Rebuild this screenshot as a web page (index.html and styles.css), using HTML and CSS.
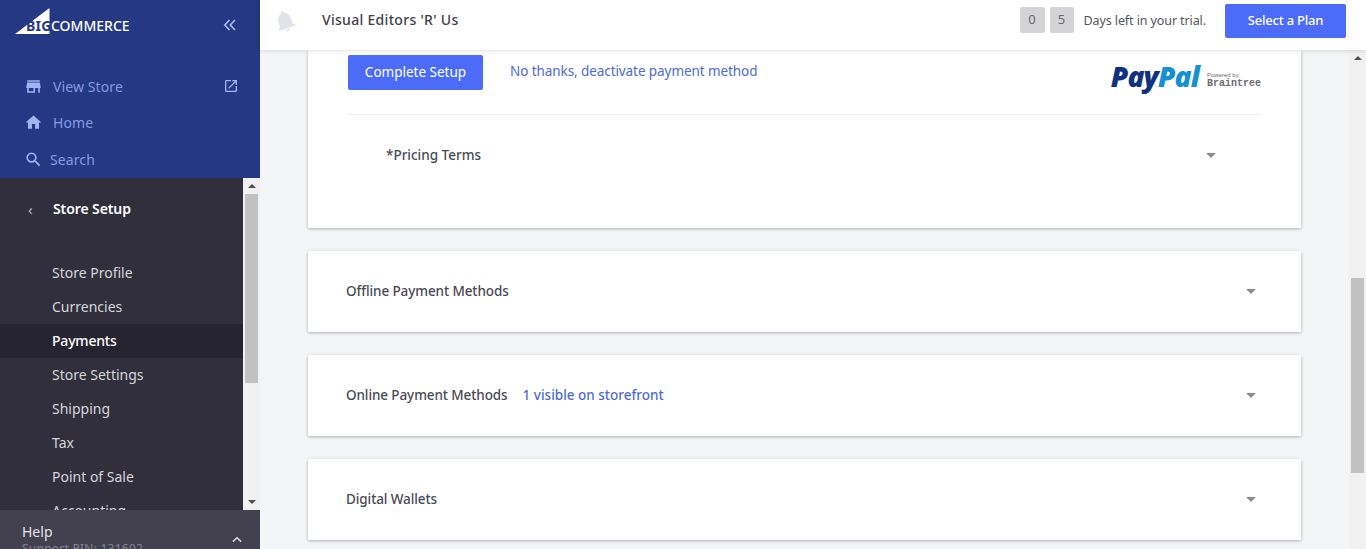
FILE: index.html
```html
<!DOCTYPE html>
<html lang="en">
<head>
<meta charset="utf-8">
<title>Payments</title>
<link rel="stylesheet" href="styles.css">
</head>
<body>
<div class="app">
  <aside class="sidebar">
    <div class="brand">
      <div class="logo">
        <svg class="logo-tri" viewBox="0 0 36 27" width="36" height="27"><path d="M0 26 L34.5 0 V26 Z" fill="#fff"/></svg>
        <span class="logo-big">BIG</span><span class="logo-commerce">COMMERCE</span>
      </div>
      <svg class="collapse" viewBox="0 0 14 14" width="14" height="14"><path d="M6.5 2 L1.8 7 L6.5 12 M12 2 L7.3 7 L12 12" fill="none" stroke="#a9b7f0" stroke-width="1.7"/></svg>
    </div>
    <nav class="top-nav">
      <a class="top-item">
        <svg class="ti" viewBox="0 0 24 24" width="19" height="19"><path d="M20 4H4v2h16V4zm1 10v-2l-1-5H4l-1 5v2h1v6h10v-6h4v6h2v-6h1zm-9 4H6v-4h6v4z"/></svg>
        <span class="ti-label">View Store</span>
        <svg class="ti-ext" viewBox="0 0 24 24" width="16" height="16"><path d="M19 19H5V5h7V3H5a2 2 0 0 0-2 2v14a2 2 0 0 0 2 2h14c1.1 0 2-.9 2-2v-7h-2v7zM14 3v2h3.59l-9.83 9.83 1.41 1.41L19 6.41V10h2V3h-7z"/></svg>
      </a>
      <a class="top-item">
        <svg class="ti" viewBox="0 0 24 24" width="19" height="19"><path d="M10 20v-6h4v6h5v-8h3L12 3 2 12h3v8z"/></svg>
        <span class="ti-label">Home</span>
      </a>
      <a class="top-item search">
        <svg class="ti" viewBox="0 0 24 24" width="19" height="19"><path d="M15.5 14h-.79l-.28-.27A6.471 6.471 0 0 0 16 9.5 6.5 6.5 0 1 0 9.5 16c1.61 0 3.09-.59 4.23-1.57l.27.28v.79l5 4.99L20.49 19l-4.99-5zm-6 0C7.01 14 5 11.99 5 9.5S7.01 5 9.5 5 14 7.01 14 9.5 11.99 14 9.5 14z"/></svg>
        <span class="ti-label">Search</span>
      </a>
    </nav>
    <div class="sub-wrap">
      <div class="sub-nav">
        <div class="sub-head"><span class="back">‹</span><span class="sub-title">Store Setup</span></div>
        <ul class="sub-list">
          <li>Store Profile</li>
          <li>Currencies</li>
          <li class="active">Payments</li>
          <li>Store Settings</li>
          <li>Shipping</li>
          <li>Tax</li>
          <li>Point of Sale</li>
          <li>Accounting</li>
        </ul>
      </div>
      <div class="sbar">
        <div class="sbar-btn"><span class="arrow-up"></span></div>
        <div class="sbar-thumb side-thumb"></div>
        <div class="sbar-fill"></div>
        <div class="sbar-btn"><span class="arrow-down"></span></div>
      </div>
    </div>
    <div class="help">
      <div class="help-text">
        <div class="help-title">Help</div>
        <div class="help-pin">Support PIN: 131692</div>
      </div>
      <svg class="help-chev" viewBox="0 0 12 8" width="10" height="7"><path d="M1 6.5 L6 1.8 L11 6.5" fill="none" stroke="#d8d8de" stroke-width="1.8"/></svg>
    </div>
  </aside>
  <div class="right">
    <header class="topbar">
      <svg class="bell" viewBox="0 0 24 24" width="26" height="26"><path d="M12 22c1.1 0 2-.9 2-2h-4c0 1.1.9 2 2 2zm6-6v-5c0-3.07-1.63-5.64-4.5-6.32V4c0-.83-.67-1.5-1.5-1.5s-1.5.67-1.5 1.5v.68C7.64 5.36 6 7.92 6 11v5l-2 2v1h16v-1l-2-2z"/></svg>
      <div class="store-name">Visual Editors 'R' Us</div>
      <div class="trial">
        <span class="digit">0</span>
        <span class="digit">5</span>
        <span class="trial-text">Days left in your trial.</span>
      </div>
      <button class="btn plan-btn">Select a Plan</button>
    </header>
    <div class="below">
      <main class="content">
        <section class="card first">
          <div class="setup-row">
            <button class="btn setup-btn">Complete Setup</button>
            <a class="link deactivate">No thanks, deactivate payment method</a>
            <div class="paypal">
              <span class="pp-word"><span class="pp-pay">Pay</span><span class="pp-pal">Pal</span></span>
              <span class="pp-by"><span class="pp-powered">Powered by</span><span class="pp-bt">Braintree</span></span>
            </div>
          </div>
          <div class="pricing">
            <span class="pricing-label">*Pricing Terms</span>
            <span class="caret"></span>
          </div>
        </section>
        <section class="card fold">
          <span class="fold-title">Offline Payment Methods</span>
          <span class="caret"></span>
        </section>
        <section class="card fold">
          <span class="fold-title">Online Payment Methods</span>
          <span class="fold-note">1 visible on storefront</span>
          <span class="caret"></span>
        </section>
        <section class="card fold">
          <span class="fold-title">Digital Wallets</span>
          <span class="caret"></span>
        </section>
      </main>
      <div class="sbar page-bar">
        <div class="sbar-btn"><span class="arrow-up"></span></div>
        <div class="sbar-space"></div>
        <div class="sbar-thumb page-thumb"></div>
        <div class="sbar-fill"></div>
      </div>
    </div>
  </div>
</div>
</body>
</html>
```
FILE: styles.css
```css
* { box-sizing: border-box; }
html, body { margin: 0; height: 100%; overflow: hidden; }
body { font-family: "Noto Sans", "Open Sans", sans-serif; font-size: 14px; background: #f4f5f7; color: #3c3c46; }
.app { display: flex; height: 549px; overflow: hidden; }

/* Sidebar */
.sidebar { width: 260px; flex: none; display: flex; flex-direction: column; height: 549px; }
.brand { height: 68px; background: #253883; padding: 8px 23px 0 15px; display: flex; justify-content: space-between; align-items: flex-start; }
.logo { position: relative; width: 116px; height: 27px; display: flex; align-items: center; padding-left: 11px; }
.logo-tri { position: absolute; left: 0; top: 0; }
.logo-big { position: relative; color: #253883; font-weight: 700; font-size: 14px; width: 25px; margin-top: 7px; letter-spacing: .2px; }
.logo-commerce { position: relative; color: #fff; font-weight: 500; font-size: 14px; margin-top: 7px; letter-spacing: 0; }
.collapse { margin-top: 10px; }
.top-nav { height: 110px; background: #253883; display: flex; flex-direction: column; }
.top-item { height: 36.5px; display: flex; align-items: center; padding: 0 21px 0 24px; color: #8798e0; font-size: 14px; letter-spacing: .1px; }
.ti { fill: #a3b3f3; flex: none; }
.ti-label { margin-left: 10px; flex: 1; }
.search .ti-label { margin-left: 7px; }
.ti-ext { fill: #a3b3f3; flex: none; }
.sub-wrap { flex: 1; min-height: 0; display: flex; background: #312f3c; overflow: hidden; }
.sub-nav { flex: 1; min-width: 0; }
.sub-head { height: 61px; display: flex; align-items: center; padding: 0 0 0 28px; color: #fff; }
.back { width: 25px; color: #b5b5bd; font-size: 15px; }
.sub-title { font-weight: 600; font-size: 14px; letter-spacing: -.1px; }
.sub-list { list-style: none; margin: 17px 0 0; padding: 0; }
.sub-list li { height: 34px; line-height: 34px; padding-left: 52px; color: #d5d5da; font-size: 14px; }
.sub-list li.active { background: #262430; color: #fff; font-weight: 500; letter-spacing: -.2px; }
.sbar { width: 17px; flex: none; background: #f1f1f1; display: flex; flex-direction: column; align-items: center; }
.sbar-btn { height: 16px; flex: none; width: 100%; display: flex; align-items: center; justify-content: center; }
.sbar-thumb { width: 13px; background: #c1c1c1; flex: none; }
.side-thumb { height: 189px; }
.sbar-fill { flex: 1; }
.sbar-space { height: 212px; flex: none; }
.page-thumb { height: 195px; }
.arrow-up { border: 4px solid transparent; border-top: 0; border-bottom: 4px solid #505050; }
.arrow-down { border: 4px solid transparent; border-bottom: 0; border-top: 4px solid #505050; }
.help { height: 39px; flex: none; background: #42404e; display: flex; justify-content: space-between; padding: 13px 18px 0 22px; overflow: hidden; }
.help-title { color: #e4e4e8; font-size: 14px; line-height: 17px; }
.help-pin { color: #85838f; font-size: 12px; line-height: 14px; margin-top: 2px; letter-spacing: .25px; }
.help-chev { margin-top: 13px; }

/* Right */
.right { flex: 1; min-width: 0; display: flex; flex-direction: column; height: 549px; }
.topbar { height: 50px; flex: none; background: #fff; box-shadow: 0 1px 4px rgba(40,40,60,.14); position: relative; z-index: 2; display: flex; align-items: flex-start; padding: 0 20px 0 12px; }
.bell { fill: #e0e3ea; transform: rotate(-18deg); margin-top: 8px; }
.store-name { margin-left: 24px; margin-top: 10px; font-size: 14px; line-height: 20px; font-weight: 500; letter-spacing: .3px; color: #3f3f49; }
.trial { margin-left: auto; display: flex; align-items: center; margin-top: 7px; height: 26px; }
.digit { width: 25px; height: 26px; margin-right: 5px; background: #d4d4d6; border-radius: 2px; text-align: center; line-height: 25px; font-size: 13px; color: #696970; }
.digit + .digit { width: 24px; }
.trial-text { margin-left: 5px; font-size: 12.5px; color: #55555e; margin-right: 19px; white-space: nowrap; letter-spacing: -.1px; }
.btn { border: 0; border-radius: 2px; background: #4b6bf8; color: #fff; font-family: inherit; padding: 0 0 2px; }
.plan-btn { width: 121px; height: 34px; margin-top: 4px; font-size: 13px; font-weight: 500; letter-spacing: -.2px; }
.below { flex: 1; min-height: 0; display: flex; overflow: hidden; }
.content { flex: 1; min-width: 0; padding: 0 48px; overflow: hidden; }
.page-bar { height: 100%; }
.card { background: #fff; box-shadow: 0 1px 3px rgba(50,50,60,.35); margin-bottom: 23px; }
.first { height: 178px; padding: 5px 40px 0; }
.setup-row { height: 60px; display: flex; align-items: flex-start; border-bottom: 1px solid #eceef1; }
.setup-btn { width: 135px; height: 35px; flex: none; font-size: 13.5px; font-weight: 400; }
.link { color: #4f6bd0; }
.deactivate { margin-left: 27px; margin-top: 6px; font-size: 13.5px; line-height: 20px; letter-spacing: -.08px; }
.paypal { margin-left: auto; display: flex; align-items: flex-start; margin-top: 6px; }
.pp-word { font-family: "Open Sans", sans-serif; font-weight: 800; font-style: italic; font-size: 28px; line-height: 30px; letter-spacing: -.85px; }
.pp-pay { color: #11327f; }
.pp-pal { color: #1490d3; }
.pp-by { display: flex; flex-direction: column; margin-left: 8px; margin-top: 11px; color: #6b6b70; }
.pp-powered { font-size: 6px; line-height: 7px; font-family: "Liberation Sans", sans-serif; }
.pp-bt { font-family: "Liberation Mono", monospace; font-weight: 700; font-size: 10px; line-height: 10px; }
.pricing { display: flex; align-items: center; justify-content: space-between; padding: 0 45px 0 38px; height: 80px; }
.pricing-label { font-weight: 500; font-size: 13.5px; color: #4a4a54; }
.caret { border: 5px solid transparent; border-bottom: 0; border-top: 5px solid #8a8a92; }
.fold { height: 81px; display: flex; align-items: center; padding: 0 45px 1px 38px; }
.fold-title { font-weight: 500; font-size: 13.5px; letter-spacing: -.1px; color: #4a4a54; }
.fold-note { margin-left: 15px; color: #4f6bd0; font-size: 13.5px; font-weight: 500; }
.fold .caret { margin-left: auto; }
```
